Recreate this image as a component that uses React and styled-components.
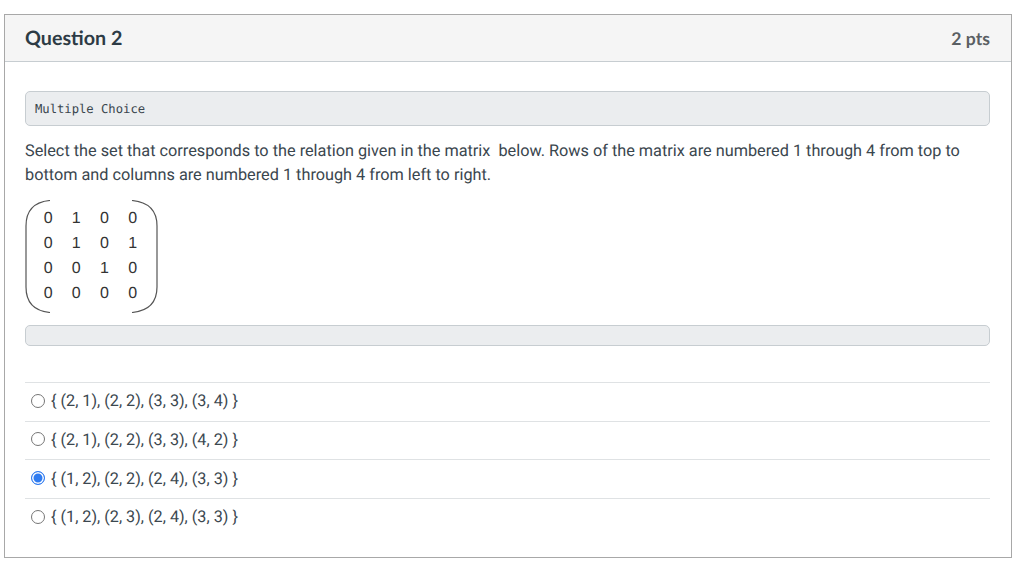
import React from "react";
import styled, { createGlobalStyle } from "styled-components";

const Global = createGlobalStyle`
  html, body { margin: 0; padding: 0; background: #fff; }
  body { width: 1024px; height: 566px; overflow: hidden; text-rendering: geometricPrecision; }
`;

const Page = styled.div`
  padding: 14px 12px 8px 4px;
`;

const Card = styled.section`
  box-sizing: border-box;
  height: 544px;
  border: 1px solid #a8a8a8;
  display: flex;
  flex-direction: column;
`;

const Header = styled.header`
  box-sizing: border-box;
  height: 47px;
  flex: none;
  display: flex;
  align-items: center;
  justify-content: space-between;
  padding: 0 21px 0 20px;
  background: #f5f5f5;
  border-bottom: 1px solid #c7cdd1;
  font-family: Lato, sans-serif;
  font-weight: 700;
`;

const Title = styled.h2`
  margin: 0;
  font-size: 19.7px;
  font-weight: 700;
  color: #2d3b45;
`;

const Points = styled.span`
  font-size: 17.6px;
  color: #5a5f63;
`;

const Body = styled.div`
  padding: 29px 21px 0 20px;
  display: flex;
  flex-direction: column;
`;

const Banner = styled.div`
  box-sizing: border-box;
  height: 35px;
  padding: 0 9px;
  display: flex;
  align-items: center;
  background: #ebedef;
  border: 1px solid #c7cdd1;
  border-radius: 5px;
  font-family: "DejaVu Sans Mono", monospace;
  font-size: 12.2px;
  color: #3a464e;
`;

const Prompt = styled.p`
  margin: 13px 0 0;
  font-family: Roboto, sans-serif;
  font-size: 16.28px;
  line-height: 24px;
  color: #3a464e;
`;

const Matrix = styled.div`
  position: relative;
  width: 133px;
  height: 113px;
  margin-top: 13px;
`;

const MatrixGrid = styled.div`
  position: absolute;
  left: 9px;
  top: 6px;
  display: grid;
  grid-template-columns: repeat(4, 28.2px);
  grid-auto-rows: 25.2px;
  font-family: "Liberation Sans", sans-serif;
  font-size: 16px;
  color: #333;
`;

const Cell = styled.span`
  display: flex;
  align-items: center;
  justify-content: center;
`;

const Parens = styled.svg`
  position: absolute;
  inset: 0;
`;

const EmptyBar = styled.div`
  box-sizing: border-box;
  height: 21px;
  margin-top: 12px;
  background: #ebedef;
  border: 1px solid #c7cdd1;
  border-radius: 5px;
`;

const Answers = styled.ul`
  list-style: none;
  margin: 36px 0 0;
  padding: 0;
`;

const Answer = styled.li`
  box-sizing: border-box;
  height: 38.67px;
  display: flex;
  align-items: center;
  gap: 6px;
  padding: 0 0 2px 6px;
  font-family: Roboto, sans-serif;
  font-size: 16.2px;
  color: #3c4850;
  border-top: 1px solid #dfe2e4;
`;

const Radio = styled.span`
  box-sizing: border-box;
  width: 14px;
  height: 14px;
  flex: none;
  border-radius: 50%;
  border: ${(p) => (p.$checked ? "1.5px solid #2f7bf0" : "1px solid #767676")};
  background: ${(p) => (p.$checked ? "#2f7bf0" : "#fff")};
  box-shadow: ${(p) => (p.$checked ? "inset 0 0 0 1.5px #fff" : "none")};
`;

const rows = [
  [0, 1, 0, 0],
  [0, 1, 0, 1],
  [0, 0, 1, 0],
  [0, 0, 0, 0],
];

const answers = [
  "{ (2, 1), (2, 2), (3, 3), (3, 4) }",
  "{ (2, 1), (2, 2), (3, 3), (4, 2) }",
  "{ (1, 2), (2, 2), (2, 4), (3, 3) }",
  "{ (1, 2), (2, 3), (2, 4), (3, 3) }",
];

export default function App() {
  return (
    <Page>
      <Global />
      <Card>
        <Header>
          <Title>Question 2</Title>
          <Points>2 pts</Points>
        </Header>
        <Body>
          <Banner>Multiple Choice</Banner>
          <Prompt>
            Select the set that corresponds to the relation given in the matrix&nbsp; below. Rows of the matrix are
            numbered 1 through 4 from top to bottom and columns are numbered 1 through 4 from left to right.
          </Prompt>
          <Matrix>
            <Parens width="133" height="113" viewBox="0 0 133 113" fill="none" stroke="#555" strokeWidth="1.2">
              <path d="M25 .5C9 2 1 10 1 26V87C1 103 9 111 25 112.5" />
              <path d="M107 .5C123 2 132 10 132 26V87C132 103 123 111 107 112.5" />
            </Parens>
            <MatrixGrid>
              {rows.flat().map((v, i) => (
                <Cell key={i}>{v}</Cell>
              ))}
            </MatrixGrid>
          </Matrix>
          <EmptyBar />
          <Answers>
            {answers.map((a, i) => (
              <Answer key={a}>
                <Radio $checked={i === 2} />
                {a}
              </Answer>
            ))}
          </Answers>
        </Body>
      </Card>
    </Page>
  );
}
